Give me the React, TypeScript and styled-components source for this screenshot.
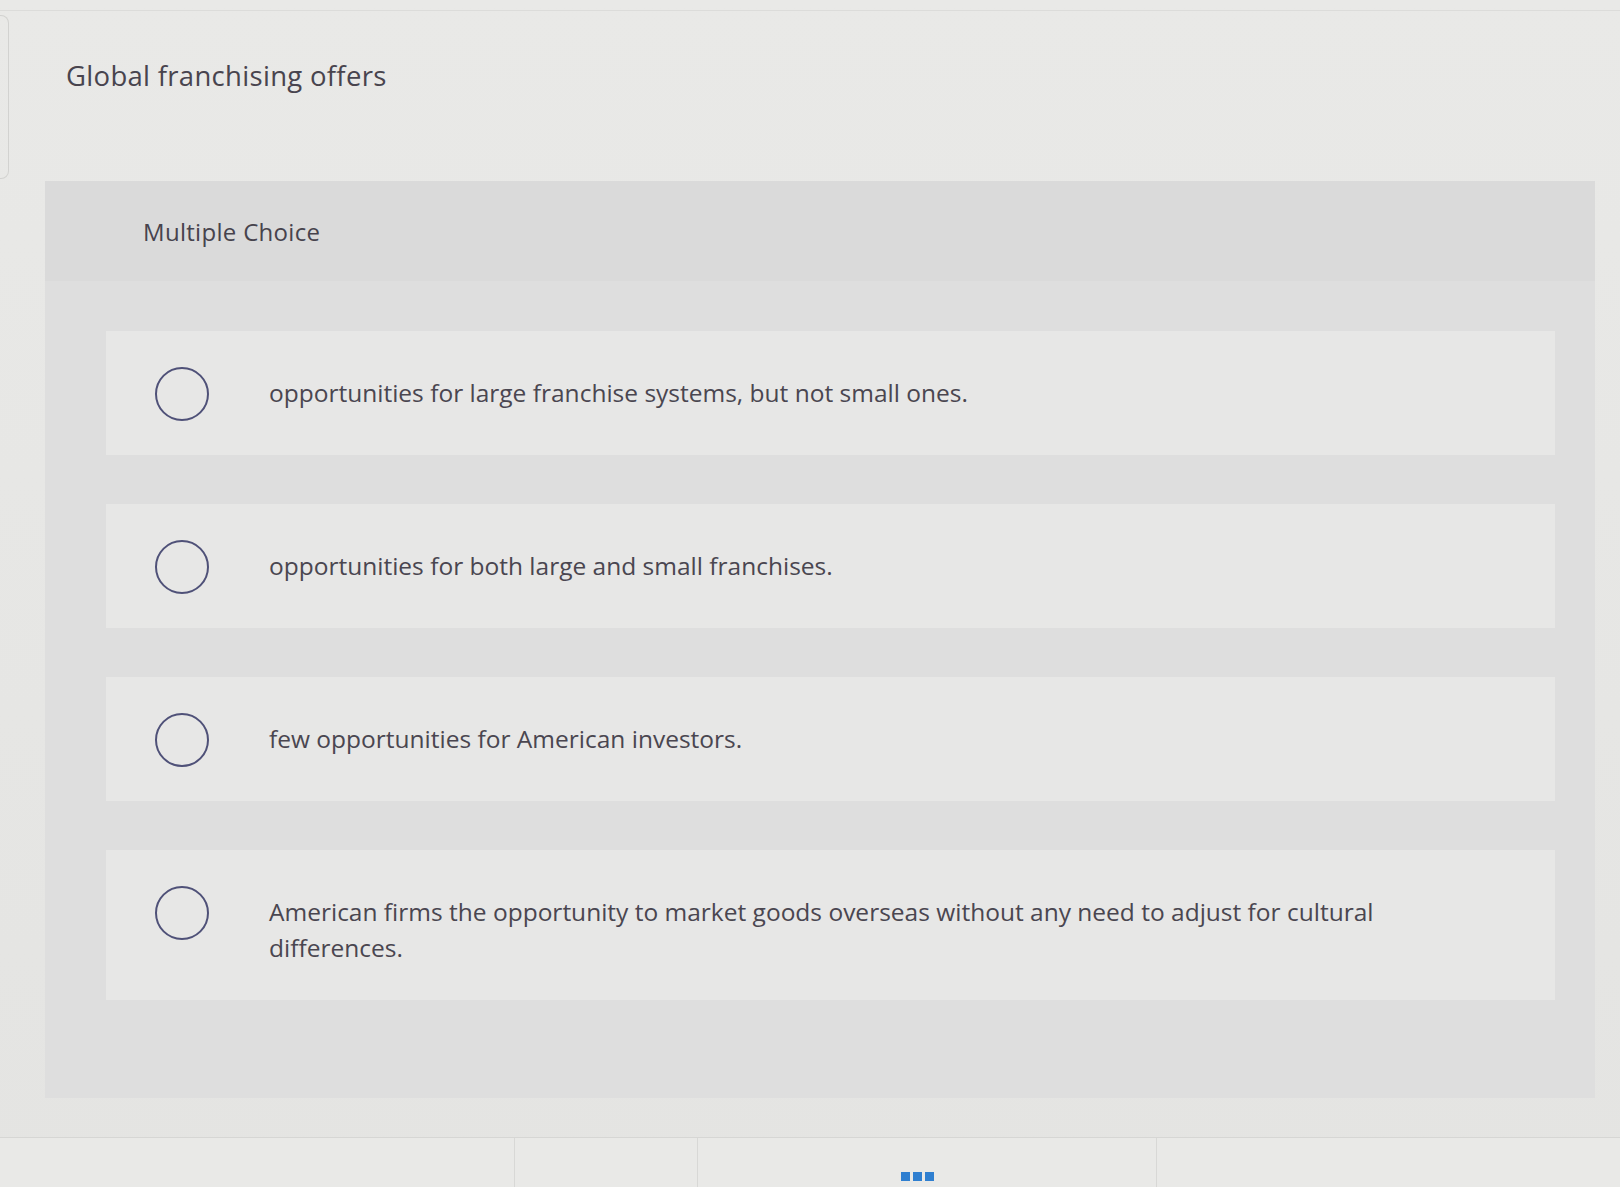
import React from 'react'
import styled, { createGlobalStyle } from 'styled-components'

const GlobalStyle = createGlobalStyle`
    html, body {
        margin: 0;
        padding: 0;
        background: #e7e6e4;
    }
    body {
        font-family: "Open Sans", Lato, "Liberation Sans", sans-serif;
        color: #4a4650;
    }
`
const Page = styled.div`
    width: 1620px;
    height: 1187px;
    overflow: hidden;
    display: flex;
    flex-direction: column;
    background: linear-gradient(180deg, #e9e9e7 0%, #e4e4e2 100%);
`
const TopRule = styled.div`
    height: 10px;
    border-bottom: 1px solid #dcdcda;
    margin-bottom: 4px;
`
const TitleRow = styled.div`
    display: flex;
    align-items: flex-start;
    height: 166px;
`
const SideTab = styled.div`
    width: 8px;
    height: 162px;
    border: 1px solid #d2d2d0;
    border-left: none;
    border-radius: 0 8px 8px 0;
`
const Title = styled.h1`
    margin: 42px 0 0 57px;
    font-size: 27.5px;
    font-weight: 400;
    letter-spacing: 0.3px;
    color: #48444e;
`
const Panel = styled.section`
    margin: 0 25px 0 45px;
    background: #dedede;
    display: flex;
    flex-direction: column;
`
const PanelHeader = styled.div`
    height: 100px;
    display: flex;
    align-items: center;
    padding-left: 98px;
    background: #dadada;
    font-size: 24px;
    letter-spacing: 0.3px;
    color: #47434d;
`
const OptionList = styled.div`
    display: flex;
    flex-direction: column;
    gap: 49px;
    padding: 50px 40px 98px 61px;
`
const Card = styled.label`
    display: flex;
    align-items: flex-start;
    padding: 36px 0 34px 49px;
    background: #e7e7e6;
    cursor: pointer;
`
const Radio = styled.span`
    flex: none;
    width: 50px;
    height: 50px;
    border: 2px solid #4f5178;
    border-radius: 50%;
    background: transparent;
`
const OptionText = styled.span`
    margin: 8px 0 0 60px;
    max-width: 1180px;
    font-size: 24.5px;
    line-height: 36px;
    color: #4a4650;
`
const Footer = styled.div`
    margin-top: 39px;
    flex: 1;
    border-top: 1px solid #d6d6d4;
    display: flex;
    background: #e9e9e7;
`
const FooterCell = styled.div<{ w: number }>`
    width: ${p => p.w}px;
    border-right: 1px solid #d8d8d6;
    position: relative;
`
const GridIcon = styled.div`
    position: absolute;
    left: 203px;
    top: 34px;
    display: flex;
    gap: 3px;
`
const GridDot = styled.span`
    width: 9px;
    height: 9px;
    background: #2f7fd0;
`

const options = [
    'opportunities for large franchise systems, but not small ones.',
    'opportunities for both large and small franchises.',
    'few opportunities for American investors.',
    'American firms the opportunity to market goods overseas without any need to adjust for cultural differences.',
]

const App = () => {
    return (
        <>
            <GlobalStyle />
            <Page>
                <TopRule />
                <TitleRow>
                    <SideTab />
                    <Title>Global franchising offers</Title>
                </TitleRow>
                <Panel>
                    <PanelHeader>Multiple Choice</PanelHeader>
                    <OptionList>
                        {options.map(text => (
                            <Card key={text}>
                                <Radio />
                                <OptionText>{text}</OptionText>
                            </Card>
                        ))}
                    </OptionList>
                </Panel>
                <Footer>
                    <FooterCell w={514} />
                    <FooterCell w={182} />
                    <FooterCell w={458}>
                        <GridIcon>
                            <GridDot />
                            <GridDot />
                            <GridDot />
                        </GridIcon>
                    </FooterCell>
                </Footer>
            </Page>
        </>
    )
}

export default App
